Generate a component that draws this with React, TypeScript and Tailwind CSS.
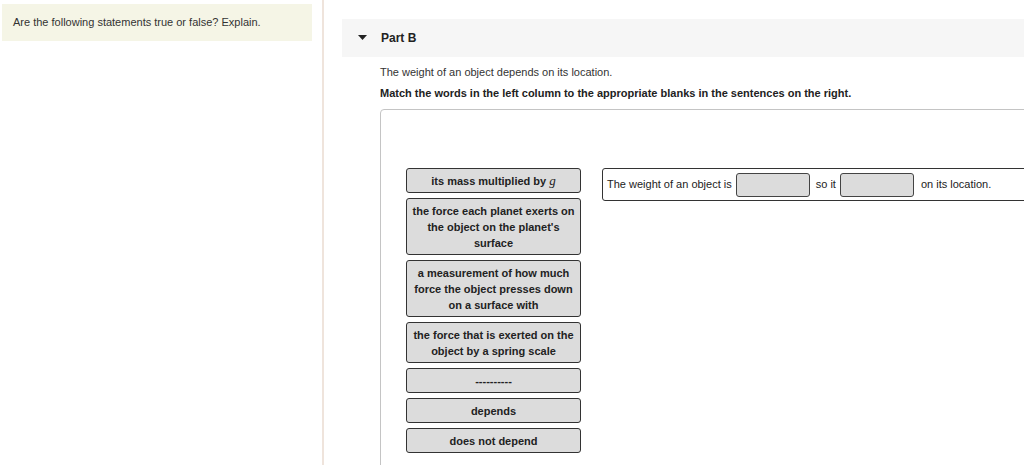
import React from 'react'

const items: React.ReactNode[] = [
  <>its mass multiplied by <span className="font-['Liberation_Serif',serif] italic font-normal text-[13px]">g</span></>,
  "the force each planet exerts on the object on the planet's surface",
  'a measurement of how much force the object presses down on a surface with',
  'the force that is exerted on the object by a spring scale',
  '----------',
  'depends',
  'does not depend',
]

export default function App() {
  return (
    <div className="w-[1024px] h-[465px] overflow-hidden flex bg-white text-[#222] font-['Liberation_Sans',Arial,sans-serif]">
      {/* left question */}
      <div className="w-[322px] shrink-0 pt-[4px] pl-[2px]">
        <div className="w-[310px] h-[37px] bg-[#f5f5e6] flex items-center pl-[11px] text-[11px] text-[#333]">
          Are the following statements true or false? Explain.
        </div>
      </div>
      <div className="w-[2px] shrink-0 h-full bg-[#efe4dc]" />

      {/* part B */}
      <div className="flex-1 pl-[18px] pt-[19px] min-w-0">
        <div className="h-[38px] bg-[#f6f6f6] flex items-center pl-[16px]">
          <svg width="9" height="6" viewBox="0 0 9 6" className="mr-[14px]">
            <path d="M0 0 L9 0 L4.5 5 Z" fill="#222" />
          </svg>
          <span className="text-[12px] font-bold">Part B</span>
        </div>

        <div className="pl-[38px]">
          <p className="mt-[9px] text-[11px] leading-[13px] text-[#333]">The weight of an object depends on its location.</p>
          <p className="mt-[8px] text-[11px] leading-[13px] font-bold">
            Match the words in the left column to the appropriate blanks in the sentences on the right.
          </p>

          <div className="mt-[9px] w-[700px] h-[400px] border border-[#c4c4c4] rounded-tl-[4px] pl-[25px] pt-[58px] flex items-start">
            <div className="w-[175px] shrink-0 flex flex-col gap-[5px]">
              {items.map((it, i) => (
                <div
                  key={i}
                  className="border border-[#333] rounded-[3px] bg-[#dcdcdc] text-[11px] font-bold leading-[16px] text-center py-[3.5px] px-[3px]"
                >
                  {it}
                </div>
              ))}
            </div>

            <div className="ml-[21px] w-[440px] h-[33px] border border-[#333] rounded-[3px] flex items-center pl-[4px] text-[11px] text-[#222] whitespace-nowrap">
              <span>The weight of an object is</span>
              <span className="ml-[4px] w-[74px] h-[24px] bg-[#dcdcdc] border border-[#444] rounded-[3px]" />
              <span className="ml-[6px]">so it</span>
              <span className="ml-[4px] w-[74px] h-[24px] bg-[#dcdcdc] border border-[#444] rounded-[3px]" />
              <span className="ml-[7px]">on its location.</span>
            </div>
          </div>
        </div>
      </div>
    </div>
  )
}
